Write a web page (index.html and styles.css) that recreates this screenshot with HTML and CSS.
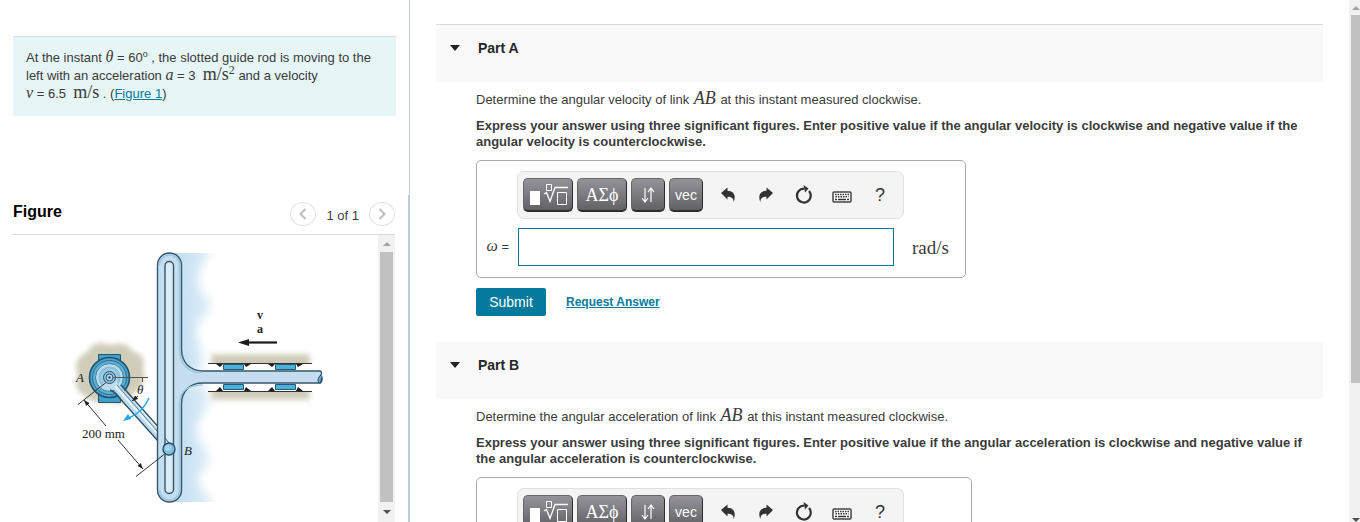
FILE: index.html
```html
<!DOCTYPE html>
<html lang="en">
<head>
<meta charset="utf-8">
<title>Angular velocity problem</title>
<link rel="stylesheet" href="styles.css">
</head>
<body>
<svg class="defs" width="0" height="0" aria-hidden="true">
  <symbol id="i-root" viewBox="0 0 40 24">
    <path d="M2 8h10v14H2z" fill="#fff"/>
    <path d="M18.500 1.500h5v6h-5zM29.500 9.500h9v12h-9z" fill="none" stroke="#fff"/>
    <path d="M16 11l2.500-1.500 3.500 9L27 4.500h13" fill="none" stroke="#fff" stroke-width="1.300"/>
  </symbol>
  <symbol id="i-arrows" viewBox="0 0 14 18">
    <path d="M4 2v13M1 12l3 4 3-4M10 16V3M7 6l3-4 3 4" fill="none" stroke="#fff" stroke-width="1.200"/>
  </symbol>
  <symbol id="i-undo" viewBox="0 0 16 16">
    <path d="M1 6L7.500 .5v3.300c6 .2 9 4.200 6.200 11.200-.2-3.700-2-5.200-6.200-5.200v2.700z" fill="#333"/>
  </symbol>
  <symbol id="i-reset" viewBox="0 0 18 20">
    <path d="M14 6a6.900 6.900 0 1 1-5-2.300" fill="none" stroke="#333" stroke-width="2.200"/>
    <path d="M8.500 0l5 3.500-3.500 4z" fill="#333"/>
  </symbol>
  <symbol id="i-keys" viewBox="0 0 20 12">
    <rect x="1" y="1" width="18" height="10" rx="1" fill="#fff" stroke="#444" stroke-width="1.500"/>
    <path d="M3 3.500h14M3.500 5.800h13" stroke="#333" stroke-width="1.400" stroke-dasharray="1.500 1"/>
    <path d="M3 8.500h2M6 8.500h8M15 8.500h2" stroke="#333" stroke-width="1.400"/>
  </symbol>
</svg>

<div class="page">
  <aside class="side">
    <p class="problem">At the instant <i class="math">θ</i> = 60<sup class="degree">o</sup> , the slotted guide rod is moving to the left with an acceleration <span class="keep"><i class="math">a</i> = 3&nbsp; <span class="unit">m/s<sup>2</sup></span></span> and a velocity <span class="keep"><i class="math">v</i> = 6.5&nbsp; <span class="unit">m/s</span></span> . (<a href="#figure">Figure 1</a>)</p>

    <section class="figure" id="figure">
      <header class="figure-head">
        <h2>Figure</h2>
        <div class="pager">
          <button type="button" aria-label="Previous figure"><svg width="10" height="14" viewBox="0 0 10 14"><path d="M7.500 2L2.500 7l5 5"/></svg></button>
          <span>1 of 1</span>
          <button type="button" aria-label="Next figure"><svg width="10" height="14" viewBox="0 0 10 14"><path d="M2.500 2l5 5-5 5"/></svg></button>
        </div>
      </header>
      <div class="figure-body">
        <svg class="drawing" viewBox="13 235 365 287" role="img" aria-label="Slotted guide rod driven by link AB">
          <defs>
            <filter id="soft" x="-40%" y="-30%" width="180%" height="160%"><feGaussianBlur stdDeviation="5"/></filter>
            <filter id="haze" x="-30%" y="-60%" width="160%" height="220%"><feGaussianBlur stdDeviation="2.500"/></filter>
            <linearGradient id="fade"><stop offset="0" stop-color="#b5d7ee"/><stop offset="1" stop-color="#e4f1f9"/></linearGradient>
            <clipPath id="above"><path d="M200 340h120v23H200z"/></clipPath>
            <clipPath id="below"><path d="M200 392h120v20H200z"/></clipPath>
            <clipPath id="right"><path d="M170 253h70v249h-70z"/></clipPath>
            <marker id="dim" viewBox="0 0 8 6" refX="8" refY="3" markerWidth="6" markerHeight="5" orient="auto-start-reverse"><path d="M0 0l8 3-8 3z" fill="#222"/></marker>
          </defs>

          <g clip-path="url(#right)">
            <path d="M165 240h47c4 14-15 22-14 42 1 12 14 14 12 26-2 10-15 12-14 24 1 10 8 16 6 34l-4 7h-33zM165 384h31c12 0 14 8 12 20-2 11-13 16-11 28 2 13 13 16 12 28-1 10-12 12-11 20 1 10 18 16 16 34h-49z" fill="url(#fade)" filter="url(#soft)"/>
          </g>
          <path d="M78 374c-5-10 1-20 10-22 2-10 15-10 22-7 9-3 20-1 22 6 10 2 14 10 11 18 4 10-2 22-10 24 0 10-12 12-22 9-12 1-22 0-25-6-10-3-12-14-8-22z" fill="#d1cdbb" filter="url(#haze)"/>
          <g clip-path="url(#above)"><path d="M213 356h95v12h-95z" fill="#cdc9b7" stroke="#d5d1c1" stroke-width="4" filter="url(#haze)"/></g>
          <g clip-path="url(#below)"><path d="M213 386h95v12h-95z" fill="#cdc9b7" stroke="#d5d1c1" stroke-width="4" filter="url(#haze)"/></g>

          <path d="M98.500 354.500h22v48h-22z" fill="#3f9fca" stroke="#23566f"/>
          <circle cx="109.500" cy="377.500" r="20" fill="#4aa5cf" stroke="#234f68" stroke-width="1.600"/>
          <circle cx="109.500" cy="377.500" r="17" fill="#5fb2d8" stroke="#2b6787"/>
          <circle cx="109.500" cy="377.500" r="14" fill="#b9dcf0" stroke="#3b7b9b"/>
          <circle cx="109.500" cy="377.500" r="10" fill="#9bcce6" stroke="#8bc0dd" stroke-width="2"/>
          <path d="M102 385q5 7 12 5l43 50 8 8 4-6-8-9-44-51q0-6-4-9z" fill="#bddbee"/>
          <path d="M110 390q3 1 5 3l43 48M121 385l40 45 9 12" fill="none" stroke="#2d5268" stroke-width="1.400"/>
          <path d="M115 386l44 49" stroke="#eaf5fb" stroke-width="2"/>
          <path d="M117 385l40 46" stroke="#5685a0"/>
          <circle cx="109.500" cy="377.500" r="6" fill="#8fc4df" stroke="#234f68"/>
          <circle cx="109.500" cy="377.500" r="3.500" fill="#b9dcf0" stroke="#234f68"/>
          <circle cx="109.500" cy="377.500" r="1.300" fill="#234f68"/>

          <path d="M157.500 265a12 12 0 0 1 24 0v84c0 14 9 22 22 22h117c3 3-1 4 0 6 3 1 1 5 0 6H203c-13 0-21.500 8-21.500 21v86a12 12 0 0 1-24 0z" fill="#c4deef" stroke="#36566a" stroke-width="1.400"/>
          <path d="M159.500 265a10 10 0 0 1 20 0v84c0 15 9 24 23 24M159.500 490a10 10 0 0 0 20 0v-86c0-13 9-19 23-19" fill="none" stroke="#9cc6e1" stroke-width="1.500"/>
          <path d="M182 377h21" stroke="#c4deef" stroke-width="8"/>
          <rect x="165" y="261.500" width="8.500" height="232" rx="4.250" fill="#d9ebf6" stroke="#36566a" stroke-width="1.400"/>
          <path d="M165 438l4 5" stroke="#2d5268"/>
          <path d="M319 377c2-3 4-1 2.500 2-.5 2-1.500 4-2.500 4-1.500-2-1-4 0-6z" fill="#66add0" stroke="#23495e"/>
          <circle cx="169" cy="449" r="6" fill="#83bedd" stroke="#24516a" stroke-width="1.400"/>
          <circle cx="168" cy="448" r="3" fill="#a9d5eb"/>

          <g fill="#49b1dc" stroke="#245a75">
            <path d="M223.500 364.500h20v5h-20zM275.500 364.500h20v5h-20zM223.500 384.500h20v5h-20zM275.500 384.500h20v5h-20z"/>
          </g>
          <path d="M208 363.500h104M208 391.500h104" stroke="#33312b"/>
          <path d="M216 364h7l-3 3zM244 364h7l-5 3zM268 364h7l-3 3zM296 364h7l-5 3zM216 391h7l-3-4zM244 391h7l-5-4zM268 391h7l-3-4zM296 391h7l-5-4z" fill="#1e1e1e"/>

          <path d="M113 377.500h35M142.500 378v4" stroke="#555" fill="none"/>
          <path d="M78 404.500l28-22M136 476.500l28-22" stroke="#333"/>
          <path d="M106 426l-22-26" stroke="#333" marker-end="url(#dim)"/>
          <path d="M118 440l25 29" stroke="#333" marker-end="url(#dim)"/>
          <path d="M138 396l-6 5" stroke="#222" marker-end="url(#dim)"/>
          <path d="M149 398q-6 14-20 20" fill="none" stroke="#20a8ea" stroke-width="1.500"/>
          <path d="M123 421l5-7 3 5z" fill="#20a8ea"/>
          <path d="M248 342.500h29" stroke="#1b1b1b" stroke-width="2.200"/>
          <path d="M238 342.500l11-3.500v7z" fill="#1b1b1b"/>

          <text x="76" y="382" class="it">A</text>
          <text x="184" y="455" class="it">B</text>
          <text x="137" y="394" class="it">θ</text>
          <text x="82" y="438">200 mm</text>
          <text x="257" y="319" class="vec">v</text>
          <text x="257" y="333" class="vec">a</text>
        </svg>
        <div class="bar" aria-hidden="true"><span class="up"></span><span class="thumb"></span><span class="down"></span></div>
      </div>
    </section>
  </aside>

  <main class="content">
    <section class="part first">
      <header class="part-head"><button type="button" class="toggle" aria-label="Collapse Part A"></button><h2>Part A</h2></header>
      <div class="part-body">
        <p>Determine the angular velocity of link <i class="math">AB</i> at this instant measured clockwise.</p>
        <p class="hint">Express your answer using three significant figures. Enter positive value if the angular velocity is clockwise and negative value if the angular velocity is counterclockwise.</p>
        <form class="answer">
          <div class="tools">
            <button type="button" class="key wide" aria-label="Templates"><svg width="40" height="24"><use href="#i-root"/></svg></button>
            <button type="button" class="key wide greek">ΑΣϕ</button>
            <button type="button" class="key" aria-label="Arrows"><svg width="14" height="18"><use href="#i-arrows"/></svg></button>
            <button type="button" class="key">vec</button>
            <div class="icons">
              <button type="button" aria-label="Undo"><svg width="16" height="16"><use href="#i-undo"/></svg></button>
              <button type="button" aria-label="Redo"><svg class="flip" width="16" height="16"><use href="#i-undo"/></svg></button>
              <button type="button" aria-label="Reset"><svg width="18" height="20"><use href="#i-reset"/></svg></button>
              <button type="button" aria-label="Keyboard shortcuts"><svg class="low" width="20" height="12"><use href="#i-keys"/></svg></button>
              <button type="button" aria-label="Help">?</button>
            </div>
          </div>
          <div class="entry">
            <label for="omega"><i class="math">ω</i> =</label>
            <input id="omega" type="text">
            <span class="unit">rad/s</span>
          </div>
        </form>
        <div class="actions">
          <button type="button" class="submit">Submit</button>
          <a href="#request">Request Answer</a>
        </div>
      </div>
    </section>

    <section class="part">
      <header class="part-head"><button type="button" class="toggle" aria-label="Collapse Part B"></button><h2>Part B</h2></header>
      <div class="part-body">
        <p>Determine the angular acceleration of link <i class="math">AB</i> at this instant measured clockwise.</p>
        <p class="hint">Express your answer using three significant figures. Enter positive value if the angular acceleration is clockwise and negative value if the angular acceleration is counterclockwise.</p>
        <form class="answer">
          <div class="tools">
            <button type="button" class="key wide" aria-label="Templates"><svg width="40" height="24"><use href="#i-root"/></svg></button>
            <button type="button" class="key wide greek">ΑΣϕ</button>
            <button type="button" class="key" aria-label="Arrows"><svg width="14" height="18"><use href="#i-arrows"/></svg></button>
            <button type="button" class="key">vec</button>
            <div class="icons">
              <button type="button" aria-label="Undo"><svg width="16" height="16"><use href="#i-undo"/></svg></button>
              <button type="button" aria-label="Redo"><svg class="flip" width="16" height="16"><use href="#i-undo"/></svg></button>
              <button type="button" aria-label="Reset"><svg width="18" height="20"><use href="#i-reset"/></svg></button>
              <button type="button" aria-label="Keyboard shortcuts"><svg class="low" width="20" height="12"><use href="#i-keys"/></svg></button>
              <button type="button" aria-label="Help">?</button>
            </div>
          </div>
          <div class="entry">
            <label for="alpha"><i class="math">α</i> =</label>
            <input id="alpha" type="text">
            <span class="unit">rad/s<sup>2</sup></span>
          </div>
        </form>
      </div>
    </section>
  </main>
  <div class="bar page-bar" aria-hidden="true"><span class="up"></span><span class="thumb"></span><span class="down"></span></div>
</div>
</body>
</html>
```
FILE: styles.css
```css
* { box-sizing: border-box; }
body {
  margin: 0;
  overflow: hidden;
  background: #fff;
  color: #3b3b3b;
  font: 13px/16px "Liberation Sans", Arial, sans-serif;
}
h2, p { margin: 0; }
button { font: inherit; padding: 0; border: 0; background: none; color: inherit; display: flex; align-items: center; justify-content: center; }
a { color: #047a9c; text-decoration: underline; }
sup { font-size: 12px; line-height: 0; vertical-align: 6px; }
.defs { position: absolute; }
.math, .unit, .degree { font-family: "Liberation Serif", "Times New Roman", serif; line-height: 1px; }
.math { font-size: 16px; }
.unit { font-size: 18px; }
.keep { white-space: nowrap; }

.page { display: flex; height: 100vh; }

/* Left column */
.side { flex: 0 0 410px; display: flex; flex-direction: column; border-right: 1px solid #c3cbd6; padding-top: 36px; }
.problem { margin: 0 13px; padding: 12px 13px; border-top: 1px solid #d5dfe1; background: #e6f5f6; line-height: 18px; min-height: 80px; }
.problem .degree { font-size: 10px; vertical-align: 5px; }
.figure { flex: 1; min-height: 0; display: flex; flex-direction: column; margin-top: 79px; padding: 0 13px; border-right: 1px solid #b9cbdf; }
.figure-head { display: flex; justify-content: space-between; height: 40px; border-bottom: 1px solid #d8d8d8; }
.figure-head h2 { color: #000; font-size: 16px; line-height: 33px; }
.pager { display: flex; gap: 10px; padding-top: 7px; height: 32px; }
.pager button { width: 26px; height: 24px; border: 1px solid #e2e2e2; border-radius: 50%; }
.pager path { fill: none; stroke: #bdbdbd; stroke-width: 2; }
.pager span { line-height: 27px; }
.figure-body { flex: 1; min-height: 0; display: flex; }
.drawing { flex: 1; min-width: 0; align-self: flex-start; }
.drawing text { font: 13px "Liberation Serif", serif; fill: #1c1c1c; }
.drawing .it { font-style: italic; }
.drawing .vec { font-size: 12px; font-weight: bold; }

/* Scroll bars */
.bar { flex: 0 0 17px; display: flex; flex-direction: column; align-items: center; background: #f1f1f1; }
.bar .up, .bar .down { flex: 0 0 17px; display: flex; align-items: center; }
.bar .down { flex-basis: 20px; }
.bar .up::before, .bar .down::before { content: ""; border: 4px solid transparent; }
.bar .up::before { border-top: 0; border-bottom-color: #a3a3a3; }
.bar .down::before { border-bottom: 0; border-top-color: #505050; }
.bar .thumb { flex: 1; width: 13px; background: #c1c1c1; }
.page-bar { flex-basis: 11px; align-items: flex-end; overflow: hidden; }
.page-bar .up { flex-basis: 15px; }
.page-bar .down { flex-basis: 4px; }
.page-bar .thumb { flex: 0 0 70.5%; width: 9px; }
.page-bar .down { margin-top: auto; }

/* Parts */
.content { flex: 1; min-width: 0; overflow: hidden; padding: 24px 26px 0; }
.part { margin-bottom: 26px; }
.part-head { display: flex; align-items: flex-start; gap: 18px; height: 57px; padding: 15px 14px; background: #f9f9f9; }
.first .part-head { height: 58px; border-top: 1px solid #dcdcdc; }
.part-head h2 { font-size: 14px; line-height: 16px; color: #262626; }
.toggle { width: 10px; height: 16px; }
.toggle::before { content: ""; border: 5px solid transparent; border-top: 6px solid #222; border-bottom: 0; }
.part-body { padding: 10px 0 0 40px; }
.part-body p { margin-bottom: 10px; }
.part-body p .math { font-size: 18px; padding: 0 1px; }
.hint { font-weight: bold; }

.answer { width: fit-content; padding: 10px 16px 11px 0; border: 1px solid #aaa; border-radius: 5px; }
.tools { display: flex; align-items: center; gap: 4px; width: 387px; height: 48px; margin: 0 0 9px 40px; padding-left: 5px; border: 1px solid #e0e0e0; border-radius: 7px; background: #f4f4f4; }
.key { flex: none; width: 34px; height: 34px; border: 1px solid #666; border-right-color: #2c2c2c; border-bottom: 2px solid #2c2c2c; border-radius: 5px; background: linear-gradient(#94939b, #626264); color: #fff; font-size: 14px; }
.wide { width: 50px; }
.greek { font-family: "Liberation Serif", serif; font-size: 18px; }
.icons { display: flex; margin-left: 2px; color: #333; font-size: 18px; }
.icons button { width: 38px; height: 34px; }
.flip { transform: scaleX(-1); }
.low { margin-top: 4px; }
.entry { display: flex; align-items: center; }
.entry label { width: 41px; padding-right: 9px; text-align: right; white-space: nowrap; }
.entry input { width: 376px; height: 38px; border: 1px solid #047a9c; padding: 0 8px; font: inherit; }
.entry .unit { margin-left: 18px; font-size: 19px; }

.actions { display: flex; align-items: center; gap: 20px; margin-top: 10px; font-size: 12px; font-weight: bold; }
.submit { width: 70px; height: 28px; border-radius: 2px; background: #047a9c; color: #fff; font-size: 14px; font-weight: normal; }
```
